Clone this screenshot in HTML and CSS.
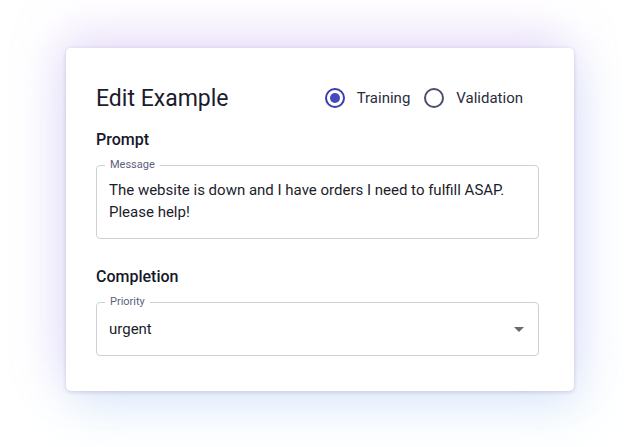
FILE: index.html
```html
<!DOCTYPE html>
<html>
<head>
<meta charset="utf-8">
<link rel="stylesheet" href="styles.css">
</head>
<body>
<div class="stage">
  <div class="card">
    <div class="header">
      <h1 class="title">Edit Example</h1>
      <div class="radios">
        <label class="radio checked"><span class="dot"></span><span>Training</span></label>
        <label class="radio"><span class="dot"></span><span>Validation</span></label>
      </div>
    </div>
    <h2 class="section">Prompt</h2>
    <div class="field">
      <span class="legend">Message</span>
      <div class="value multi">The website is down and I have orders I need to fulfill ASAP. Please help!</div>
    </div>
    <h2 class="section second">Completion</h2>
    <div class="field select">
      <span class="legend">Priority</span>
      <div class="value">urgent</div>
      <svg class="caret" width="10" height="5" viewBox="0 0 10 5"><path d="M0 0 L10 0 L5 5 Z" fill="#6b6b6b"/></svg>
    </div>
  </div>
</div>
</body>
</html>
```
FILE: styles.css
```css
* { box-sizing: border-box; }
html, body { margin: 0; padding: 0; background: #ffffff; }
body { font-family: Roboto, Inter, "Noto Sans", sans-serif; color: #1c1d2b; }
.stage { width: 640px; height: 447px; padding: 48px 0 0 66px; }
.card {
  width: 508px;
  height: 343px;
  background: #fff;
  border-radius: 5px;
  padding: 30px 35px 0 30px;
  box-shadow:
    0 1px 4px rgba(40, 40, 80, 0.18),
    -6px -14px 48px rgba(200, 160, 238, 0.34),
    6px 18px 48px rgba(160, 205, 245, 0.32);
}
.header { display: flex; align-items: center; justify-content: space-between; height: 40px; }
.title { margin: 0; font-size: 23px; font-weight: 400; color: #1b1c2e; }
.radios { display: flex; gap: 14px; margin-right: 16px; }
.radio { display: flex; align-items: center; gap: 12px; font-size: 15px; color: #2a2c3d; }
.dot {
  width: 20px; height: 20px; border-radius: 50%;
  border: 2px solid #4b4f6e;
  display: flex; align-items: center; justify-content: center;
}
.radio.checked .dot { border-color: #3b3bb4; }
.radio.checked .dot::after { content: ""; width: 10px; height: 10px; border-radius: 50%; background: #4747c2; }
.section { margin: 11px 0 0 0; font-size: 16px; font-weight: 500; color: #16172a; line-height: 22px; }
.section.second { margin-top: 27px; }
.field {
  position: relative;
  margin-top: 14px;
  border: 1.5px solid #cfd0d4;
  border-radius: 4px;
  padding: 12px 12px 14px 12px;
}
.legend {
  position: absolute; top: -8px; left: 8px;
  background: #fff; padding: 0 5px;
  font-size: 11px; line-height: 14px; color: #5d6280;
}
.value { font-size: 15px; line-height: 22px; color: #1c1d2b; }
.value.multi { min-height: 46px; padding-top: 1px; }
.select { margin-top: 14px; height: 54px; display: flex; align-items: center; padding: 0 12px; }
.select .value { flex: 1; }
.caret { margin-right: 2px; }
```
